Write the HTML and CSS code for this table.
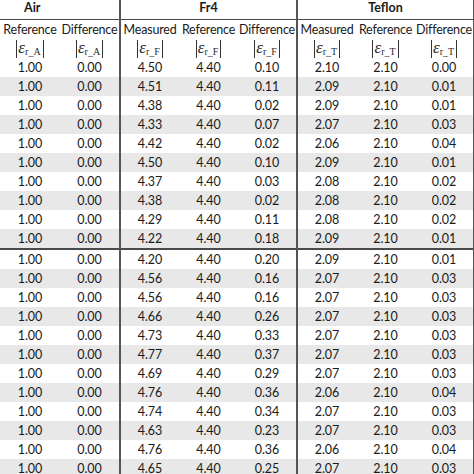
FILE: index.html
```html
<!DOCTYPE html>
<html>
<head>
<meta charset="utf-8">
<link rel="stylesheet" href="styles.css">
</head>
<body>
<table class="grid">
  <colgroup>
    <col class="c-air"><col class="c-air">
    <col class="c-x"><col class="c-x"><col class="c-x">
    <col class="c-x"><col class="c-x"><col class="c-x">
  </colgroup>
  <thead>
    <tr class="group-row">
      <th colspan="2" class="air-title">Air</th>
      <th colspan="3" class="sep">Fr4</th>
      <th colspan="3" class="sep last">Teflon</th>
    </tr>
    <tr class="label-row">
      <th>Reference</th><th>Difference</th>
      <th class="sep">Measured</th><th>Reference</th><th>Difference</th>
      <th class="sep">Measured</th><th>Reference</th><th class="last">Difference</th>
    </tr>
    <tr class="sym-row">
      <th><span class="abs"><i>ε</i><sub>r_A</sub></span></th>
      <th><span class="abs"><i>ε</i><sub>r_A</sub></span></th>
      <th class="sep"><span class="abs"><i>ε</i><sub>r_F</sub></span></th>
      <th><span class="abs"><i>ε</i><sub>r_F</sub></span></th>
      <th><span class="abs"><i>ε</i><sub>r_F</sub></span></th>
      <th class="sep"><span class="abs"><i>ε</i><sub>r_T</sub></span></th>
      <th><span class="abs"><i>ε</i><sub>r_T</sub></span></th>
      <th class="last"><span class="abs"><i>ε</i><sub>r_T</sub></span></th>
    </tr>
  </thead>
  <tbody>
    <tr><td>1.00</td><td>0.00</td><td class="sep">4.50</td><td>4.40</td><td>0.10</td><td class="sep">2.10</td><td>2.10</td><td class="last">0.00</td></tr>
    <tr class="alt"><td>1.00</td><td>0.00</td><td class="sep">4.51</td><td>4.40</td><td>0.11</td><td class="sep">2.09</td><td>2.10</td><td class="last">0.01</td></tr>
    <tr><td>1.00</td><td>0.00</td><td class="sep">4.38</td><td>4.40</td><td>0.02</td><td class="sep">2.09</td><td>2.10</td><td class="last">0.01</td></tr>
    <tr class="alt"><td>1.00</td><td>0.00</td><td class="sep">4.33</td><td>4.40</td><td>0.07</td><td class="sep">2.07</td><td>2.10</td><td class="last">0.03</td></tr>
    <tr><td>1.00</td><td>0.00</td><td class="sep">4.42</td><td>4.40</td><td>0.02</td><td class="sep">2.06</td><td>2.10</td><td class="last">0.04</td></tr>
    <tr class="alt"><td>1.00</td><td>0.00</td><td class="sep">4.50</td><td>4.40</td><td>0.10</td><td class="sep">2.09</td><td>2.10</td><td class="last">0.01</td></tr>
    <tr><td>1.00</td><td>0.00</td><td class="sep">4.37</td><td>4.40</td><td>0.03</td><td class="sep">2.08</td><td>2.10</td><td class="last">0.02</td></tr>
    <tr class="alt"><td>1.00</td><td>0.00</td><td class="sep">4.38</td><td>4.40</td><td>0.02</td><td class="sep">2.08</td><td>2.10</td><td class="last">0.02</td></tr>
    <tr><td>1.00</td><td>0.00</td><td class="sep">4.29</td><td>4.40</td><td>0.11</td><td class="sep">2.08</td><td>2.10</td><td class="last">0.02</td></tr>
    <tr class="alt"><td>1.00</td><td>0.00</td><td class="sep">4.22</td><td>4.40</td><td>0.18</td><td class="sep">2.09</td><td>2.10</td><td class="last">0.01</td></tr>
    <tr class="break"><td>1.00</td><td>0.00</td><td class="sep">4.20</td><td>4.40</td><td>0.20</td><td class="sep">2.09</td><td>2.10</td><td class="last">0.01</td></tr>
    <tr class="alt"><td>1.00</td><td>0.00</td><td class="sep">4.56</td><td>4.40</td><td>0.16</td><td class="sep">2.07</td><td>2.10</td><td class="last">0.03</td></tr>
    <tr><td>1.00</td><td>0.00</td><td class="sep">4.56</td><td>4.40</td><td>0.16</td><td class="sep">2.07</td><td>2.10</td><td class="last">0.03</td></tr>
    <tr class="alt"><td>1.00</td><td>0.00</td><td class="sep">4.66</td><td>4.40</td><td>0.26</td><td class="sep">2.07</td><td>2.10</td><td class="last">0.03</td></tr>
    <tr><td>1.00</td><td>0.00</td><td class="sep">4.73</td><td>4.40</td><td>0.33</td><td class="sep">2.07</td><td>2.10</td><td class="last">0.03</td></tr>
    <tr class="alt"><td>1.00</td><td>0.00</td><td class="sep">4.77</td><td>4.40</td><td>0.37</td><td class="sep">2.07</td><td>2.10</td><td class="last">0.03</td></tr>
    <tr><td>1.00</td><td>0.00</td><td class="sep">4.69</td><td>4.40</td><td>0.29</td><td class="sep">2.07</td><td>2.10</td><td class="last">0.03</td></tr>
    <tr class="alt"><td>1.00</td><td>0.00</td><td class="sep">4.76</td><td>4.40</td><td>0.36</td><td class="sep">2.06</td><td>2.10</td><td class="last">0.04</td></tr>
    <tr><td>1.00</td><td>0.00</td><td class="sep">4.74</td><td>4.40</td><td>0.34</td><td class="sep">2.07</td><td>2.10</td><td class="last">0.03</td></tr>
    <tr class="alt"><td>1.00</td><td>0.00</td><td class="sep">4.63</td><td>4.40</td><td>0.23</td><td class="sep">2.07</td><td>2.10</td><td class="last">0.03</td></tr>
    <tr><td>1.00</td><td>0.00</td><td class="sep">4.76</td><td>4.40</td><td>0.36</td><td class="sep">2.06</td><td>2.10</td><td class="last">0.04</td></tr>
    <tr class="alt"><td>1.00</td><td>0.00</td><td class="sep">4.65</td><td>4.40</td><td>0.25</td><td class="sep">2.07</td><td>2.10</td><td class="last">0.03</td></tr>
  </tbody>
</table>
</body>
</html>
```
FILE: styles.css
```css
html, body {
  margin: 0;
  padding: 0;
  background: #ffffff;
}

.grid {
  border-collapse: collapse;
  table-layout: fixed;
  width: 474px;
  font-family: Lato, "Open Sans", "Liberation Sans", sans-serif;
  font-size: 12.5px;
  color: #1a1a1a;
}

.c-air { width: 60px; }
.c-x { width: 59px; }

.grid th,
.grid td {
  padding: 0;
  text-align: center;
  white-space: nowrap;
  overflow: hidden;
  font-weight: normal;
  height: 19px;
  line-height: 18px;
}

.grid .group-row th {
  font-weight: bold;
  font-size: 12.5px;
  border-bottom: 1.5px solid #4a4a4a;
  line-height: 15px;
  vertical-align: top;
}

.grid .group-row th.air-title {
  text-align: left;
  padding-left: 24px;
}

.label-row th {
  letter-spacing: -0.2px;
}

.sep {
  border-left: 2px solid #555555;
}

.last {
  border-right: 2px solid #555555;
}

.grid .sym-row th {
  height: 19px;
  line-height: 17px;
  overflow: visible;
}

.abs {
  display: inline-block;
  height: 18px;
  padding: 0 2px 0 1px;
  border-left: 1px solid #333333;
  border-right: 1px solid #333333;
  font-family: "Liberation Serif", "DejaVu Serif", serif;
  line-height: 15px;
  color: #2a2a2a;
  vertical-align: middle;
}

.abs i {
  font-size: 17px;
}

.abs sub {
  font-size: 10px;
  vertical-align: -2px;
  line-height: 10px;
}

.alt td {
  background: #e8e8e8;
}

.break td {
  border-top: 2px solid #4a4a4a;
}
```
